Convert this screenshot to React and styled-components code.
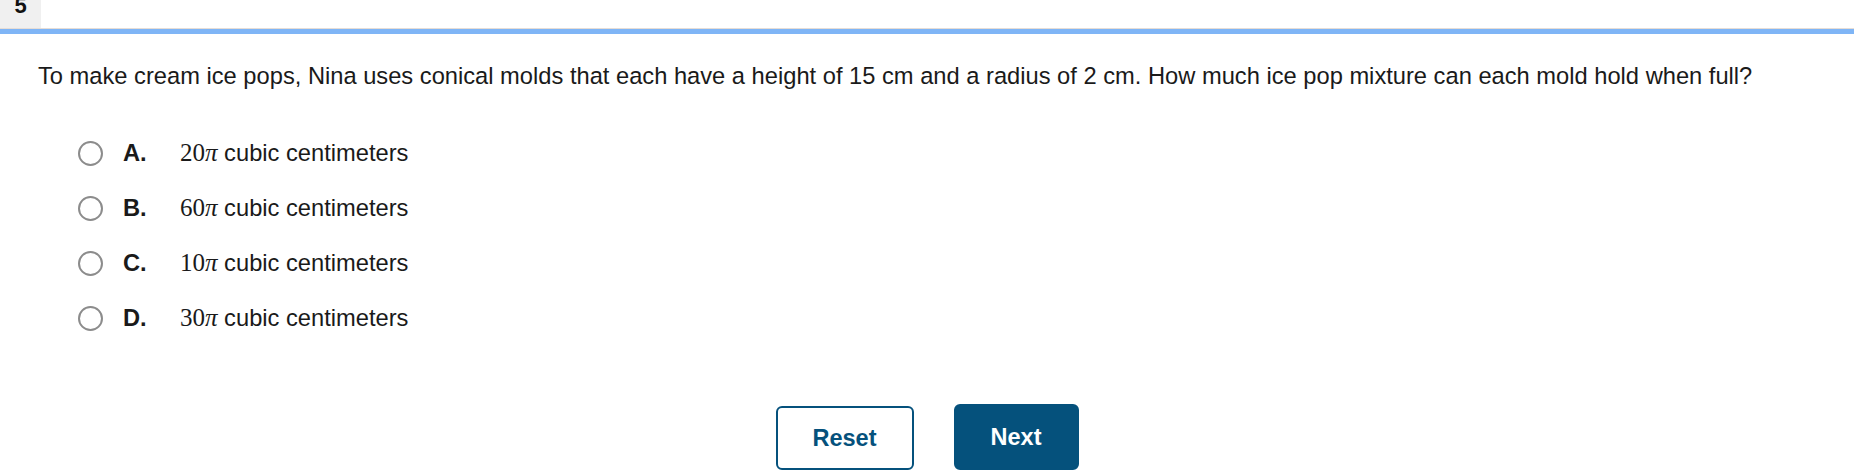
import styled, { createGlobalStyle } from "styled-components";

const GlobalStyle = createGlobalStyle`
  html, body {
    margin: 0;
    padding: 0;
    background: #ffffff;
  }
  body {
    font-family: "Liberation Sans", Arial, Helvetica, sans-serif;
    color: #1a1a1a;
  }
`;

const Page = styled.div`
  width: 1854px;
  height: 473px;
  overflow: hidden;
  display: flex;
  flex-direction: column;
`;

const Header = styled.div`
  height: 28px;
  display: flex;
  border-bottom: 1px solid #e6ddd6;
`;

const QuestionNumber = styled.div`
  width: 41px;
  height: 28px;
  background: #f0f0f0;
  overflow: hidden;
`;

const Digit = styled.span`
  display: block;
  margin-top: -5px;
  font-weight: bold;
  font-size: 22px;
  line-height: 22px;
  text-align: center;
  color: #111;
`;

const Divider = styled.div`
  height: 5px;
  background: #7fb5f6;
`;

const Body = styled.div`
  padding: 28px 0 0 38px;
`;

const Question = styled.p`
  margin: 0;
  font-size: 23.7px;
  line-height: 28px;
  color: #1a1a1a;
`;

const Options = styled.div`
  display: flex;
  flex-direction: column;
  gap: 27px;
  margin-top: 49px;
  padding-left: 40px;
`;

const Option = styled.label`
  display: flex;
  align-items: center;
  height: 28px;
  font-size: 23.7px;
  cursor: pointer;
`;

const Radio = styled.span`
  width: 25px;
  height: 25px;
  box-sizing: border-box;
  border-radius: 50%;
  border: 2.5px solid #8c8c8c;
  background: #fff;
  flex-shrink: 0;
`;

const Letter = styled.span`
  font-weight: bold;
  width: 57px;
  margin-left: 20px;
  color: #1a1a1a;
`;

const Num = styled.span`
  font-family: "Liberation Serif", "Times New Roman", serif;
  font-size: 25px;
`;

const Pi = styled.span`
  font-family: "Liberation Serif", "Times New Roman", serif;
  font-style: italic;
  font-size: 25px;
`;

const Buttons = styled.div`
  display: flex;
  justify-content: center;
  gap: 40px;
  margin-top: 72px;
`;

const Button = styled.button`
  height: ${props => props.$primary ? "66px" : "64px"};
  width: ${props => props.$primary ? "125px" : "138px"};
  margin-top: ${props => props.$primary ? "0" : "2px"};
  border-radius: 6px;
  border: 2.5px solid #05517c;
  background: ${props => props.$primary ? "#05517c" : "#ffffff"};
  color: ${props => props.$primary ? "#ffffff" : "#05517c"};
  font-family: "Liberation Sans", Arial, sans-serif;
  font-weight: bold;
  font-size: 23.5px;
  cursor: pointer;
`;

const answers = [
  { letter: "A.", value: "20" },
  { letter: "B.", value: "60" },
  { letter: "C.", value: "10" },
  { letter: "D.", value: "30" },
];

const App = () => {
  return (
    <Page>
      <GlobalStyle />
      <Header>
        <QuestionNumber>
          <Digit>5</Digit>
        </QuestionNumber>
      </Header>
      <Divider />
      <Body>
        <Question>
          To make cream ice pops, Nina uses conical molds that each have a height of 15 cm and a radius of 2 cm. How
          much ice pop mixture can each mold hold when full?
        </Question>
        <Options>
          {answers.map(a => (
            <Option key={a.letter}>
              <Radio />
              <Letter>{a.letter}</Letter>
              <span>
                <Num>{a.value}</Num>
                <Pi>π</Pi> cubic centimeters
              </span>
            </Option>
          ))}
        </Options>
      </Body>
      <Buttons>
        <Button>Reset</Button>
        <Button $primary>Next</Button>
      </Buttons>
    </Page>
  );
};

export default App;
